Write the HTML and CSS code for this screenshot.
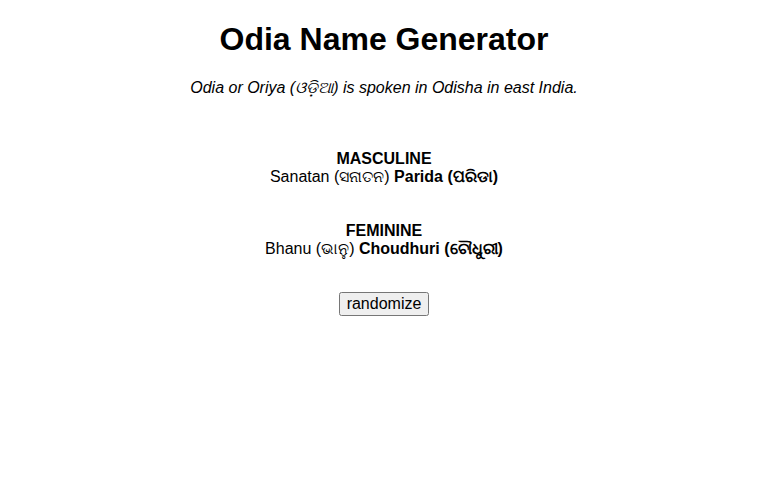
FILE: index.html
```html
<!DOCTYPE html>
<html lang="en">
<head>
    <meta charset="UTF-8">
    <meta name="viewport" content="width=device-width, initial-scale=1.0">
    <title>Odia Name Generator</title>
    <link rel="stylesheet" href="styles.css">
</head>
<body>
    <h1>Odia Name Generator</h1>
    <p class="intro">Odia or Oriya (ଓଡ଼ିଆ) is spoken in Odisha in east India.</p>

    <div class="names">
        <div class="name">
            <div class="gender">MASCULINE</div>
            <div>Sanatan (ସନାତନ) <b>Parida (ପରିଡା)</b></div>
        </div>
        <div class="name">
            <div class="gender">FEMININE</div>
            <div>Bhanu (ଭାନୁ) <b>Choudhuri (ଚୌଧୁରୀ)</b></div>
        </div>
    </div>

    <button id="randomize">randomize</button>
</body>
</html>
```

FILE: styles.css
```css
body {
    font-family: "Liberation Sans", Arial, sans-serif;
    text-align: center;
    color: #000;
    background: #fff;
    margin: 0 8px;
}

h1 {
    font-size: 32px;
    margin: 21px 0;
}

.intro {
    font-style: italic;
    margin: 16px 0;
}

.names {
    padding-top: 37px;
}

.name {
    line-height: 18px;
    margin-bottom: 36px;
}

.name:last-child {
    margin-bottom: 34px;
}

.gender {
    font-weight: bold;
}

button {
    font-family: "Liberation Sans", Arial, sans-serif;
    font-size: 16px;
}
```
